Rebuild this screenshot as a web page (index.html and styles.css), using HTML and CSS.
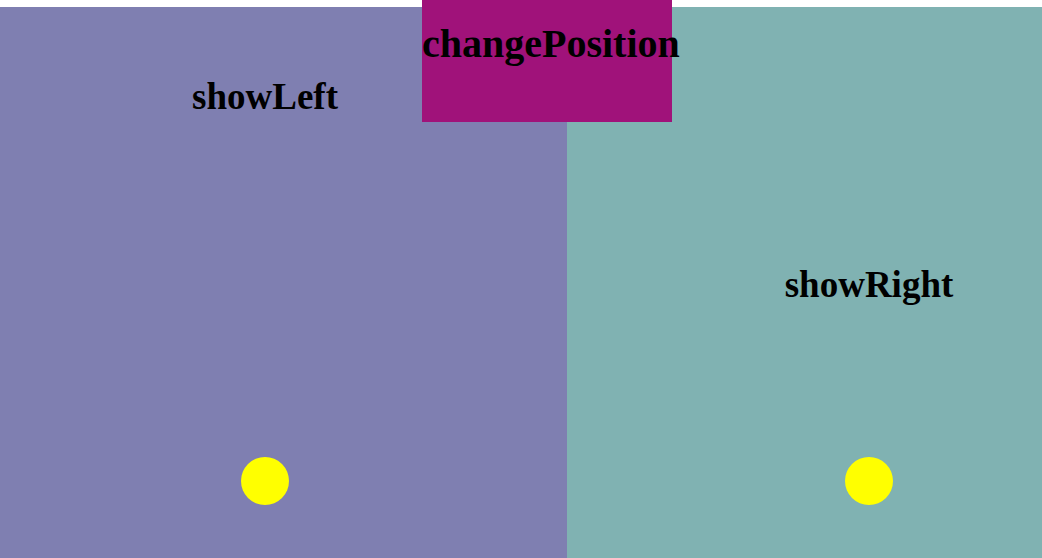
FILE: index.html
```html
<!DOCTYPE html>
<html lang="en">
<head>
  <meta charset="UTF-8">
  <title>Position demo</title>
  <link rel="stylesheet" href="styles.css">
</head>
<body>
  <div class="stage">
    <section class="side left">
      <h2 class="label">showLeft</h2>
      <span class="dot"></span>
    </section>
    <section class="side right">
      <h2 class="label">showRight</h2>
      <span class="dot"></span>
    </section>

    <!-- the toggle floats over both panels -->
    <div class="toggle">changePosition</div>
  </div>
</body>
</html>
```

FILE: styles.css
```css
html, body {
  margin: 0;
  padding: 0;
  height: 100%;
  background: #ffffff;
  font-family: "Liberation Serif", "Times New Roman", serif;
  overflow: hidden;
}
.stage {
  position: relative;
  display: flex;
  height: 100%;
  padding-top: 7px;
  box-sizing: border-box;
}
.side {
  display: flex;
  flex-direction: column;
  align-items: center;
  box-sizing: border-box;
}
.left {
  width: 567px;
  background-color: #7f7fb1;
  padding-right: 37px;
}
.right {
  flex: 1;
  background-color: #80b2b2;
  padding-left: 129px;
}
.label {
  margin: 0;
  font-size: 37px;
  font-weight: bold;
  line-height: 1;
  color: #000;
}
.left .label {
  margin-top: 71px;
}
.right .label {
  margin-top: 259px;
}
.dot {
  width: 48px;
  height: 48px;
  border-radius: 50%;
  background: #ffff00;
  margin-top: auto;
  margin-bottom: 53px;
}
.toggle {
  position: absolute;
  top: 0;
  left: 422px;
  width: 250px;
  height: 122px;
  background-color: #a0127a;
  font-size: 40px;
  font-weight: bold;
  line-height: 1;
  padding-top: 24px;
  box-sizing: border-box;
  white-space: nowrap;
  color: #000;
}
```
